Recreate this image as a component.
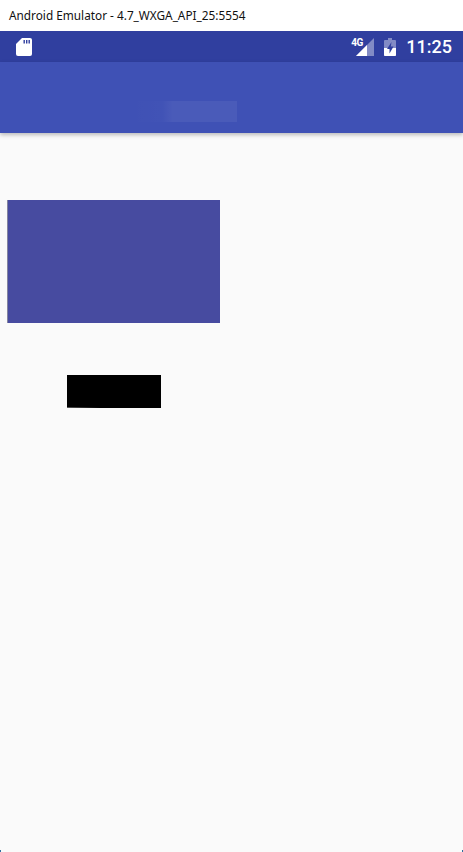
<script>
</script>

<div class="window">
  <div class="titlebar">Android Emulator - 4.7_WXGA_API_25:5554</div>
  <div class="statusbar">
    <svg class="sd" viewBox="0 0 16 18" width="16" height="18" aria-hidden="true">
      <path fill="#fff" d="M6 0H14a2 2 0 0 1 2 2V16a2 2 0 0 1-2 2H2a2 2 0 0 1-2-2V6Z" />
      <path fill="#303f9f" d="M7.500 2h1.400v3.600H7.500ZM10 2h1.400v3.600H10ZM12.500 2h1.400v3.600h-1.400Z" />
    </svg>
    <div class="status-right">
      <div class="signal">
        <span class="lte">4G</span>
        <svg viewBox="0 0 18 18" width="18" height="18" aria-hidden="true">
          <path fill="#fff" fill-opacity="0.4" d="M18 0V18H0Z" />
          <path fill="#fff" d="M11 7V18H0Z" />
        </svg>
      </div>
      <svg class="battery" viewBox="0 0 12 18" width="12" height="18" aria-hidden="true">
        <path fill="#fff" fill-opacity="0.4" d="M4 0h4v2h3a1 1 0 0 1 1 1V17a1 1 0 0 1-1 1H1a1 1 0 0 1-1-1V3a1 1 0 0 1 1-1h3Z" />
        <path fill="#fff" d="M0 10H12V17a1 1 0 0 1-1 1H1a1 1 0 0 1-1-1Z" />
        <path fill="#303f9f" d="M7.500 4 3 11H5.500V15.500L9.500 8.500H6.800Z" />
      </svg>
      <span class="clock">11:25</span>
    </div>
  </div>
  <header class="appbar">
    <div class="smudge"></div>
  </header>
  <main class="content">
    <div class="image-block"></div>
    <div class="black-block"></div>
  </main>
</div>

<style>
  :global(body) {
    margin: 0;
    background: #fafafa;
  }

  .window {
    width: 463px;
    height: 852px;
    display: flex;
    flex-direction: column;
    overflow: hidden;
    background: #fafafa;
  }

  .titlebar {
    height: 31px;
    flex: none;
    box-sizing: border-box;
    padding: 8px 0 0 9px;
    background: #fff;
    color: #111;
    font: 11.8px/15px "Noto Sans", "Open Sans", sans-serif;
  }

  .statusbar {
    height: 31px;
    flex: none;
    display: flex;
    align-items: center;
    justify-content: space-between;
    box-sizing: border-box;
    padding: 0 11px 0 16px;
    background: #303f9f;
  }

  .status-right {
    display: flex;
    align-items: center;
  }

  .signal {
    position: relative;
    width: 23px;
    height: 18px;
    display: flex;
    justify-content: flex-end;
    margin-right: 10px;
  }

  .lte {
    position: absolute;
    left: 0;
    top: 0;
    color: #fff;
    font: 700 10px/10px Roboto, sans-serif;
    letter-spacing: -0.5px;
  }

  .battery {
    margin-right: 10px;
  }

  .clock {
    color: #fff;
    font: 500 18px/22px Roboto, sans-serif;
  }

  .appbar {
    position: relative;
    z-index: 1;
    height: 71px;
    flex: none;
    display: flex;
    align-items: flex-end;
    box-sizing: border-box;
    padding: 0 0 11px 130px;
    background: #3f51b5;
    box-shadow: 0 2px 4px rgba(0, 0, 0, 0.25);
  }

  .smudge {
    width: 107px;
    height: 21px;
    background: linear-gradient(90deg, rgba(255, 255, 255, 0), rgba(255, 255, 255, 0.01) 30%, rgba(255, 255, 255, 0.06) 40%);
  }

  .content {
    flex: 1;
    display: flex;
    flex-direction: column;
    padding: 67px 0 0 7px;
    background:
      linear-gradient(#2f6f9f, #2f6f9f) left bottom / 1px 2px no-repeat,
      linear-gradient(#2f6f9f, #2f6f9f) right bottom / 1px 2px no-repeat,
      #fafafa;
  }

  .image-block {
    width: 213px;
    height: 123px;
    box-sizing: border-box;
    border-left: 1px solid #85859f;
    background: #474ba0;
  }

  .black-block {
    width: 94px;
    height: 33px;
    margin: 52px 0 0 60px;
    background:
      linear-gradient(90deg, #555, #000 35%) left bottom / 100% 1px no-repeat,
      #000;
  }
</style>
